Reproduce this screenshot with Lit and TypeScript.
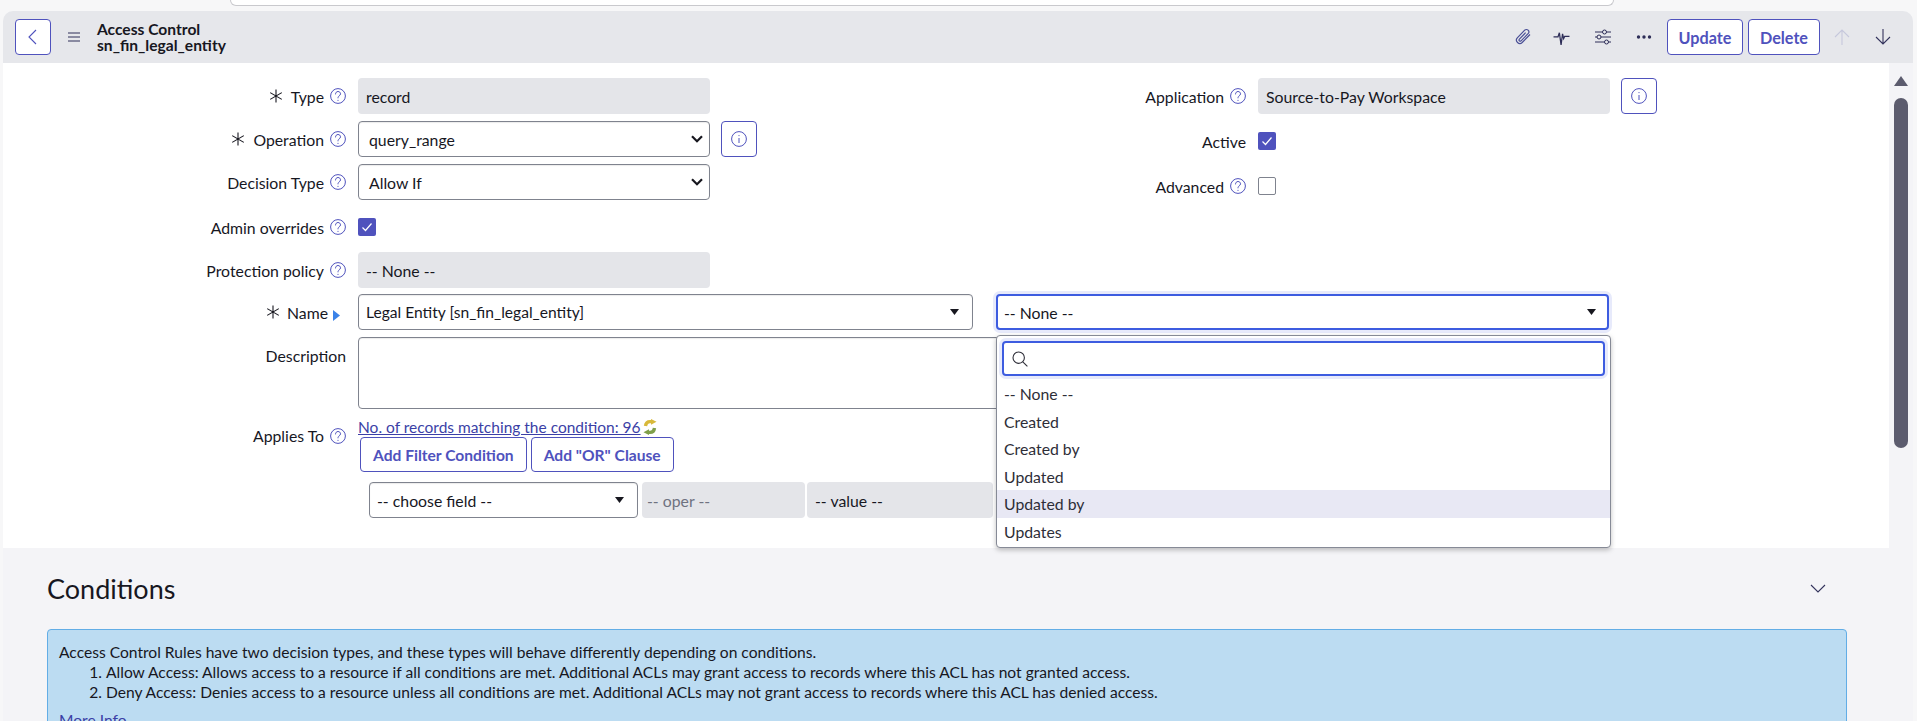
import { LitElement, html, css, svg } from 'lit';
import { customElement } from 'lit/decorators.js';

const helpIcon = html`<svg class="help" viewBox="0 0 16 16" width="16" height="16" fill="none" stroke="#4f52bd">
  <circle cx="8" cy="8" r="7.4"></circle>
  <path d="M5.5 6c0-1.4 1.1-2.5 2.5-2.5s2.5 1 2.5 2.3c0 1.1-.7 1.6-1.3 2.1-.7.5-1.2 1-1.2 2" stroke-linecap="round"></path>
  <circle cx="8" cy="12.3" r=".6" fill="#4f52bd" stroke="none"></circle>
</svg>`;

const star = html`<svg class="star" viewBox="0 0 14 14" width="14" height="14" fill="none" stroke="#17171f" stroke-width="1.1">
  <path d="M7 .5v13M1.2 3.6l11.6 6.8M12.8 3.6L1.2 10.4"></path>
</svg>`;

const infoIcon = html`<svg viewBox="0 0 16 16" width="16" height="16" fill="none" stroke="#4f52bd">
  <circle cx="8" cy="8" r="7.4"></circle>
  <path d="M8 7v5"></path>
  <circle cx="8" cy="4.6" r=".6" fill="#4f52bd" stroke="none"></circle>
</svg>`;

const tick = html`<svg viewBox="0 0 18 18" width="18" height="18" fill="none" stroke="#fff" stroke-width="1.2">
  <path d="M4.5 9.5l3 3 6-7"></path>
</svg>`;

const caret = svg`<path d="M0 0h9L4.5 6z" fill="#17171f"></path>`;

const chevron = html`<svg viewBox="0 0 12 8" width="12" height="8" fill="none" stroke="#17171f" stroke-width="2.2"><path d="M1 1.2l5 5 5-5"></path></svg>`;

@customElement('app-root')
export class AppRoot extends LitElement {
  static styles = css`
    :host {
      display: block;
      height: 721px;
      overflow: hidden;
      font-family: Lato, 'Liberation Sans', sans-serif;
      font-size: 15.8px;
      color: #17171f;
      background: #f7f7f8;
    }

    * {
      box-sizing: border-box;
    }

    .page {
      padding: 0 4px 0 3px;
    }

    .pill {
      width: 1384px;
      height: 6px;
      margin: 0 0 5px 227px;
      background: #fff;
      border: 1px solid #c9c9cd;
      border-top: none;
      border-radius: 0 0 18px 18px;
    }

    /* header bar */
    .bar {
      display: flex;
      align-items: center;
      height: 52px;
      padding: 0 10px 0 12px;
      background: #e6e7eb;
      border-radius: 10px 10px 0 0;
    }

    .btn {
      display: inline-flex;
      align-items: center;
      justify-content: center;
      height: 36px;
      background: #fff;
      border: 1px solid #4f52bd;
      border-radius: 4px;
      color: #4f52bd;
      font-family: inherit;
      font-size: 16.2px;
      font-weight: 700;
      padding: 0;
    }

    .back {
      width: 36px;
    }

    .menu {
      margin-left: 16px;
    }

    .title {
      margin-left: 16px;
      font-weight: 700;
      font-size: 15.6px;
      line-height: 16px;
    }

    .tools {
      margin-left: auto;
      display: flex;
      align-items: center;
    }

    .tool {
      display: flex;
      justify-content: center;
      width: 41px;
    }

    .clip {
      margin-right: -2px;
      margin-left: 2px;
    }

    .update {
      width: 76px;
      margin-left: 3px;
    }

    .delete {
      width: 72px;
      margin-left: 5px;
    }

    .arrows {
      display: flex;
      margin-left: 1px;
    }

    /* main form */
    .main {
      display: flex;
    }

    .form {
      flex: 1;
      height: 485px;
      padding-top: 15px;
      background: #fff;
    }

    .rail {
      width: 24px;
      padding: 13px 5px 0;
      background: #f4f4f7;
    }

    .rail-up {
      width: 0;
      height: 0;
      margin: 0 auto;
      border-left: 7px solid transparent;
      border-right: 7px solid transparent;
      border-bottom: 10px solid #5c5c6e;
    }

    .thumb {
      height: 350px;
      margin-top: 12px;
      border-radius: 7px;
      background: #5c5c6e;
    }

    .columns {
      display: flex;
    }

    .col-left {
      display: flex;
      flex-direction: column;
      width: 770px;
    }

    .row {
      display: flex;
      align-items: center;
      min-height: 36px;
      margin-bottom: 7px;
    }

    .col-right .row {
      margin-bottom: 9px;
    }

    .cell {
      display: flex;
      align-items: center;
      justify-content: flex-end;
      gap: 6px;
      flex: none;
      width: 355px;
      padding-right: 12px;
    }

    .col-right .cell {
      width: 485px;
    }

    .star {
      margin-right: 2px;
    }

    .help {
      flex: none;
    }

    .row-check {
      margin-top: 2px;
    }

    .row-protect {
      margin-bottom: 6px;
    }

    .field {
      height: 36px;
      padding: 0 8px;
      display: flex;
      align-items: center;
      border-radius: 4px;
    }

    .readonly {
      background: #e4e5e9;
      width: 352px;
    }

    .input {
      height: 36px;
      border: 1px solid #7f838e;
      border-radius: 4px;
      background: #fff;
      box-shadow: inset 0 1px 1px rgba(0, 0, 0, 0.08);
    }

    .pick {
      display: flex;
      align-items: center;
      justify-content: space-between;
      width: 352px;
      padding: 0 6px 0 10px;
    }

    .info {
      width: 36px;
      margin-left: 11px;
      flex: none;
    }

    .check {
      width: 18px;
      height: 18px;
      border-radius: 2px;
      background: #4f52bd;
    }

    .check.off {
      background: #fff;
      border: 1px solid #7f838e;
    }

    .name-pick {
      padding: 0 13px 0 7px;
      font-size: 15.6px;
    }

    .name-main {
      width: 615px;
    }

    .name-side {
      position: relative;
      margin-left: 23px;
      width: 613px;
    }

    .name-side .input {
      width: 100%;
      border: 2px solid #3d5ce0;
      box-shadow: 0 0 0 3px #e7eafb;
      padding: 0 11px 0 6px;
    }

    .name-label {
      gap: 5px;
      padding-right: 18px;
      font-size: 15.8px;
    }

    .tri {
      margin-top: 6px;
    }

    .pop {
      position: absolute;
      left: 0;
      top: 41px;
      z-index: 2;
      width: 615px;
      padding: 5px 0 1px;
      background: #fff;
      border: 1px solid #868a96;
      border-radius: 4px;
      box-shadow: 0 2px 5px rgba(0, 0, 0, 0.25);
    }

    .search {
      display: flex;
      align-items: center;
      height: 35px;
      margin: 0 5px 4px;
      padding-left: 8px;
      border: 2px solid #3d5ce0;
      border-radius: 4px;
      box-shadow: 0 0 0 3px #e7eafb;
    }

    .opt {
      height: 27.6px;
      line-height: 27.6px;
      padding-left: 7px;
      color: #2e2e38;
    }

    .opt.hover {
      background: #e8e8f4;
    }

    .area {
      width: 1252px;
      height: 72px;
    }

    .row-desc {
      align-items: flex-start;
      margin-bottom: 8px;
    }

    .row-desc .cell {
      padding-top: 9px;
    }

    .row-applies {
      align-items: flex-start;
      margin: 0;
    }

    .row-applies .cell {
      padding-top: 9px;
    }

    .link {
      display: flex;
      align-items: center;
      height: 20px;
      color: #3b3fa6;
      font-size: 15.5px;
      text-decoration: underline;
    }

    .link svg {
      margin-left: 2px;
    }

    .add {
      display: flex;
      gap: 4px;
      margin-left: 2px;
    }

    .add .btn {
      height: 35px;
      padding: 0 12px;
      font-size: 15.6px;
    }

    .filter {
      display: flex;
      align-items: center;
      margin: 10px 0 0 11px;
    }

    .filter .input {
      width: 269px;
      padding: 0 13px 0 7px;
    }

    .oper {
      width: 163px;
      margin-left: 4px;
      padding-left: 5px;
      color: #6f7280;
      background: #e4e5e9;
    }

    .value {
      width: 186px;
      margin-left: 2px;
      background: #e4e5e9;
    }

    /* conditions section */
    .cond {
      display: flex;
      align-items: center;
      justify-content: space-between;
      height: 81px;
      padding: 0 87px 0 44px;
      background: #f4f4f7;
    }

    .cond h2 {
      margin: 0;
      font-size: 27px;
      font-weight: 400;
    }

    .cond-body {
      height: 92px;
      padding: 0 66px 0 44px;
      background: #f4f4f7;
    }

    .note {
      height: 120px;
      padding: 12px 11px;
      background: #bcdcf2;
      border: 1px solid #62ade6;
      border-radius: 4px;
      font-size: 15.6px;
      line-height: 20px;
    }

    .note ol {
      margin: 0;
      padding-left: 47px;
    }

    .note a {
      display: block;
      margin-top: 8px;
      color: #3b3fa6;
    }
  `;

  render() {
    return html`
      <div class="page">
        <div class="pill"></div>
        <div class="bar">
          <button class="btn back">
            <svg viewBox="0 0 16 16" width="16" height="16" fill="none" stroke="#4f52bd" stroke-width="1.1"><path d="M11 1L4 8l7 7"></path></svg>
          </button>
          <svg class="menu" viewBox="0 0 14 10" width="14" height="10" fill="none" stroke="#2e2e58"><path d="M1 1h12M1 5h12M1 9h12"></path></svg>
          <div class="title">Access Control<br />sn_fin_legal_entity</div>
          <div class="tools">
            <span class="tool clip">
              <svg viewBox="0 0 18 18" width="18" height="18" fill="none" stroke="#4a4f96" stroke-width="1.2"><path d="M16 6.5l-7.8 8a3.4 3.4 0 0 1-4.9-4.7l7.4-7.6a2.4 2.4 0 0 1 3.4 3.4l-7 7.2a1.2 1.2 0 0 1-1.7-1.7l6.2-6.4"></path></svg>
            </span>
            <span class="tool">
              <svg viewBox="0 0 16 16" width="17" height="17" fill="none" stroke="#2e2e58" stroke-width="1.2"><path d="M.5 7.5h4.2L6 3.5 7.6 15 9 4.5l1 4.5 1-2h4.5"></path></svg>
            </span>
            <span class="tool">
              <svg viewBox="0 0 18 18" width="18" height="18" fill="none" stroke="#2e2e58"><path d="M1 4h16M1 9h16M1 14h16"></path><circle cx="10.5" cy="4" r="2" fill="#e6e7eb"></circle><circle cx="5" cy="9" r="2" fill="#e6e7eb"></circle><circle cx="12.5" cy="14" r="2" fill="#e6e7eb"></circle></svg>
            </span>
            <span class="tool">
              <svg viewBox="0 0 16 4" width="16" height="4" fill="#2e2e58"><circle cx="2.5" cy="2" r="1.7"></circle><circle cx="8" cy="2" r="1.7"></circle><circle cx="13.5" cy="2" r="1.7"></circle></svg>
            </span>
            <button class="btn update">Update</button>
            <button class="btn delete">Delete</button>
            <div class="arrows">
              <span class="tool">
                <svg viewBox="0 0 18 18" width="18" height="18" fill="none" stroke="#c6c8dc" stroke-width="1.1"><path d="M9 17V2M2 9l7-7 7 7"></path></svg>
              </span>
              <span class="tool">
                <svg viewBox="0 0 18 18" width="18" height="18" fill="none" stroke="#33335c" stroke-width="1.1"><path d="M9 1v15M2 9l7 7 7-7"></path></svg>
              </span>
            </div>
          </div>
        </div>
        <div class="main">
          <div class="form">
            <div class="columns">
              <div class="col-left">
                <div class="row">
                  <div class="cell">${star}<span>Type</span>${helpIcon}</div>
                  <div class="field readonly">record</div>
                </div>
                <div class="row">
                  <div class="cell">${star}<span>Operation</span>${helpIcon}</div>
                  <div class="input pick">query_range ${chevron}</div>
                  <button class="btn info">${infoIcon}</button>
                </div>
                <div class="row">
                  <div class="cell"><span>Decision Type</span>${helpIcon}</div>
                  <div class="input pick">Allow If ${chevron}</div>
                </div>
                <div class="row row-check">
                  <div class="cell"><span>Admin overrides</span>${helpIcon}</div>
                  <div class="check">${tick}</div>
                </div>
                <div class="row row-protect">
                  <div class="cell"><span>Protection policy</span>${helpIcon}</div>
                  <div class="field readonly">-- None --</div>
                </div>
              </div>
              <div class="col-right">
                <div class="row">
                  <div class="cell"><span>Application</span>${helpIcon}</div>
                  <div class="field readonly">Source-to-Pay Workspace</div>
                  <button class="btn info">${infoIcon}</button>
                </div>
                <div class="row">
                  <div class="cell"><span>Active</span></div>
                  <div class="check">${tick}</div>
                </div>
                <div class="row">
                  <div class="cell"><span>Advanced</span>${helpIcon}</div>
                  <div class="check off"></div>
                </div>
              </div>
            </div>
            <div class="row">
              <div class="cell name-label">
                ${star}<span>Name</span>
                <svg class="tri" viewBox="0 0 7 11" width="7" height="11"><path d="M0 0l7 5.5L0 11z" fill="#3b82e8"></path></svg>
              </div>
              <div class="input pick name-pick name-main">
                Legal Entity [sn_fin_legal_entity]
                <svg viewBox="0 0 9 6" width="9" height="6">${caret}</svg>
              </div>
              <div class="name-side">
                <div class="input pick">
                  -- None --
                  <svg viewBox="0 0 9 6" width="9" height="6">${caret}</svg>
                </div>
                <div class="pop">
                  <div class="search">
                    <svg viewBox="0 0 16 16" width="16" height="16" fill="none" stroke="#2e2e38" stroke-width="1.1"><circle cx="6.7" cy="6.7" r="5.7"></circle><path d="M10.8 10.8l4.6 4.6"></path></svg>
                  </div>
                  <div class="opt">-- None --</div>
                  <div class="opt">Created</div>
                  <div class="opt">Created by</div>
                  <div class="opt">Updated</div>
                  <div class="opt hover">Updated by</div>
                  <div class="opt">Updates</div>
                </div>
              </div>
            </div>
            <div class="row row-desc">
              <div class="cell"><span>Description</span></div>
              <div class="input area"></div>
            </div>
            <div class="row row-applies">
              <div class="cell"><span>Applies To</span>${helpIcon}</div>
              <div>
                <div class="link">
                  No. of records matching the condition: 96
                  <svg viewBox="0 0 14 16" width="14" height="16" fill="none" stroke-width="3.4">
                    <path d="M2.5 7c.4-3 2.4-4.4 4.5-4.4h2" stroke="#d8b93a"></path>
                    <path d="M8 0l5.5 2.7L8 5.8z" fill="#d8b93a"></path>
                    <path d="M11.5 9c-.4 3-2.4 4.4-4.5 4.4H5" stroke="#7f9f4a"></path>
                    <path d="M6 10.2L.5 13.3 6 16z" fill="#7f9f4a"></path>
                  </svg>
                </div>
                <div class="add">
                  <button class="btn">Add Filter Condition</button>
                  <button class="btn">Add "OR" Clause</button>
                </div>
                <div class="filter">
                  <div class="input pick">
                    -- choose field --
                    <svg viewBox="0 0 9 6" width="9" height="6">${caret}</svg>
                  </div>
                  <div class="field oper">-- oper --</div>
                  <div class="field value">-- value --</div>
                </div>
              </div>
            </div>
          </div>
          <div class="rail">
            <div class="rail-up"></div>
            <div class="thumb"></div>
          </div>
        </div>
        <div class="cond">
          <h2>Conditions</h2>
          <svg viewBox="0 0 16 9" width="16" height="9" fill="none" stroke="#33335c" stroke-width="1.1"><path d="M1 1l7 7 7-7"></path></svg>
        </div>
        <div class="cond-body">
          <div class="note">
            Access Control Rules have two decision types, and these types will behave differently depending on conditions.
            <ol>
              <li>Allow Access: Allows access to a resource if all conditions are met. Additional ACLs may grant access to records where this ACL has not granted access.</li>
              <li>Deny Access: Denies access to a resource unless all conditions are met. Additional ACLs may not grant access to records where this ACL has denied access.</li>
            </ol>
            <a href="#">More Info</a>
          </div>
        </div>
      </div>
    `;
  }
}

declare global {
  interface HTMLElementTagNameMap {
    'app-root': AppRoot;
  }
}
